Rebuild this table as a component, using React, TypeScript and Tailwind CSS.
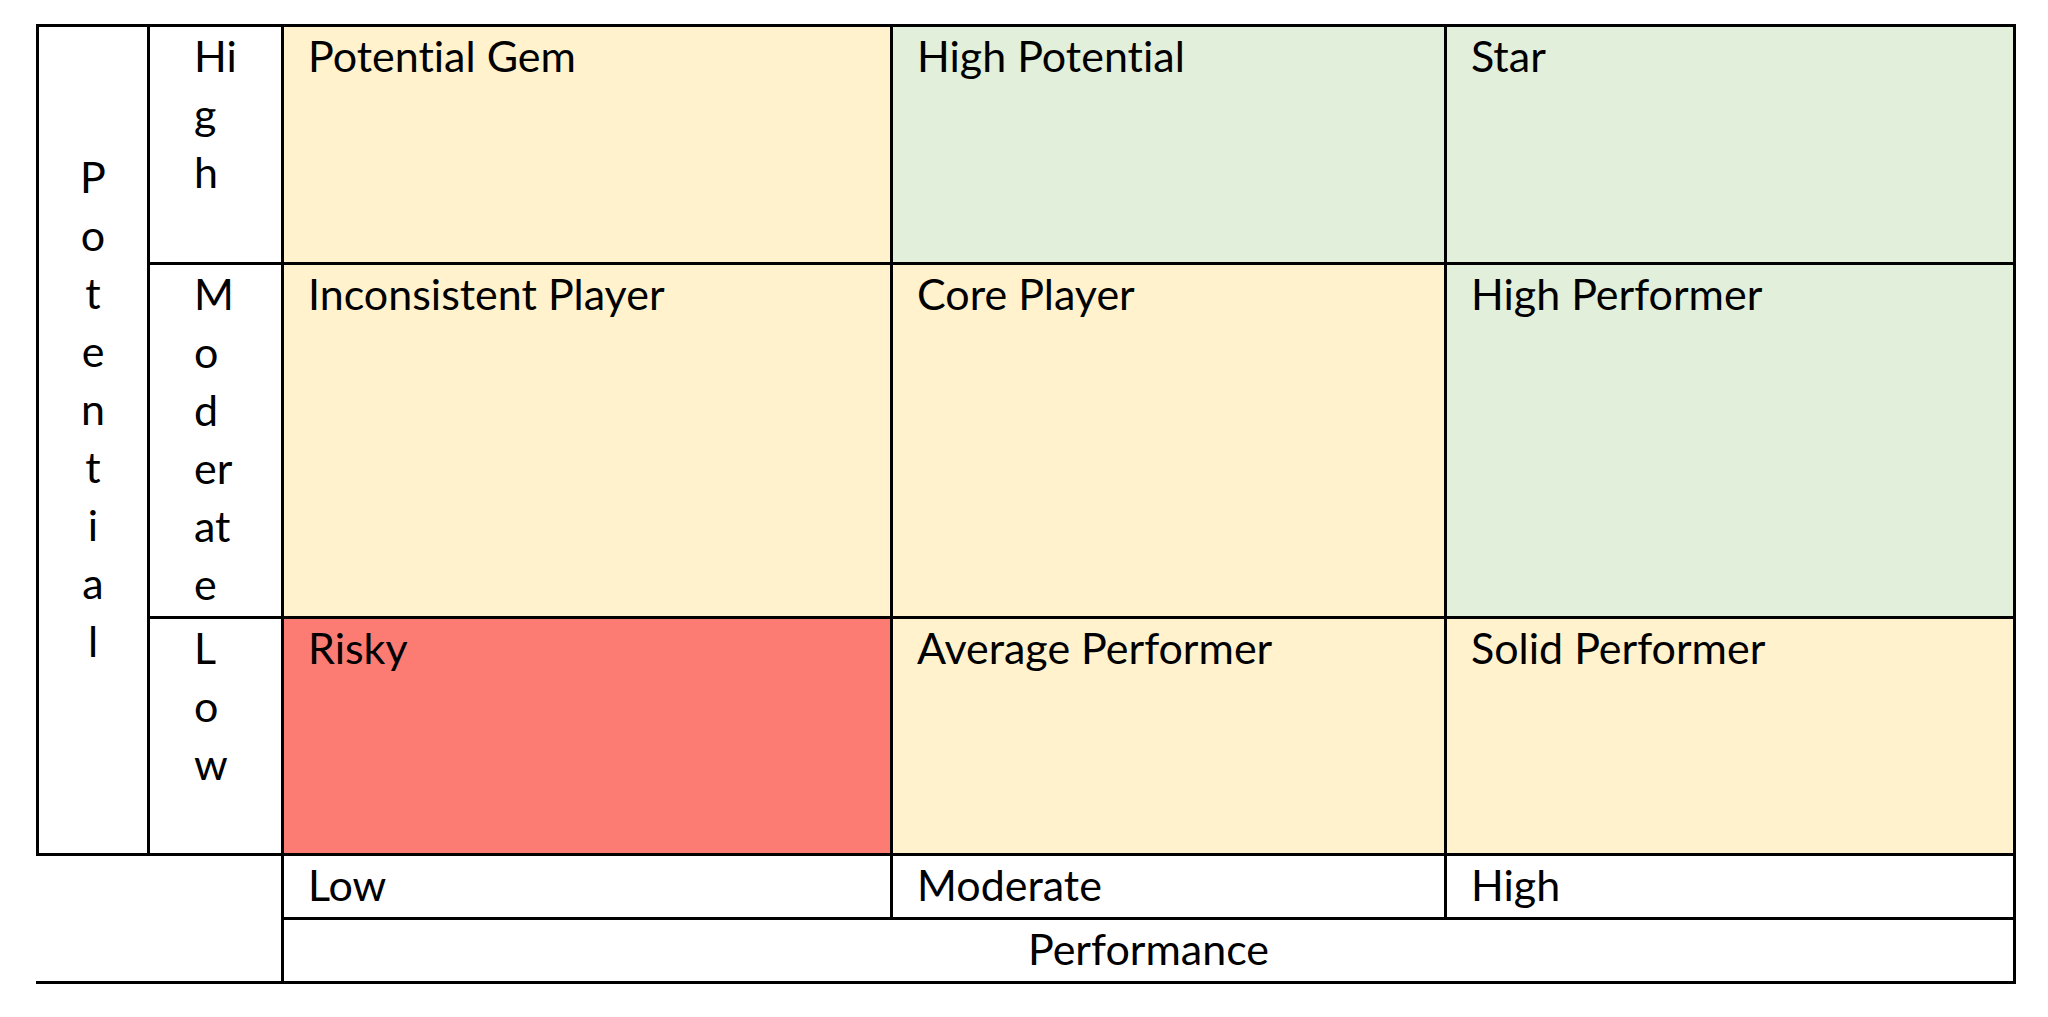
import React from "react";

const potentialLetters = ["P", "o", "t", "e", "n", "t", "i", "a", "l"];

const rowLabels = [
  { lines: ["Hi", "g", "h"], top: true },
  { lines: ["M", "o", "d", "er", "at", "e"], top: false },
  { lines: ["L", "o", "w"], top: false },
];

const cells = [
  [
    { label: "Potential Gem", bg: "bg-[#fff2cc]" },
    { label: "High Potential", bg: "bg-[#e2efda]" },
    { label: "Star", bg: "bg-[#e2efda]" },
  ],
  [
    { label: "Inconsistent Player", bg: "bg-[#fff2cc]" },
    { label: "Core Player", bg: "bg-[#fff2cc]" },
    { label: "High Performer", bg: "bg-[#e2efda]" },
  ],
  [
    { label: "Risky", bg: "bg-[#fc7b73]" },
    { label: "Average Performer", bg: "bg-[#fff2cc]" },
    { label: "Solid Performer", bg: "bg-[#fff2cc]" },
  ],
];

export default function App() {
  return (
    <div className="min-h-screen bg-white font-[Lato,sans-serif] text-[43px] leading-[58px] text-black [font-variant-ligatures:none]">
      <div className="ml-[36px] pt-[24px]">
        <div className="grid w-max grid-cols-[114px_134px_609px_554px_569px] grid-rows-[241px_354px_237px_64px_64px]">
          {/* Potential axis, spans the three rows */}
          <div className="col-start-1 row-span-3 row-start-1 flex flex-col items-center border-[3px] border-black pt-[121px]">
            {potentialLetters.map((l, i) => (
              <span key={i}>{l}</span>
            ))}
          </div>

          {rowLabels.map((row, r) => (
            <React.Fragment key={r}>
              <div
                className={
                  row.top
                    ? "col-start-2 flex flex-col border-t-[3px] border-r-[3px] border-b-[3px] border-black pl-[44px]"
                    : "col-start-2 flex flex-col border-r-[3px] border-b-[3px] border-black pl-[44px]"
                }
                style={{ gridRowStart: r + 1 }}
              >
                {row.lines.map((l, i) => (
                  <span key={i}>{l}</span>
                ))}
              </div>
              {cells[r].map((c, i) => (
                <div
                  key={i}
                  className={
                    (row.top
                      ? "border-t-[3px] border-r-[3px] border-b-[3px] border-black pl-[24px] "
                      : "border-r-[3px] border-b-[3px] border-black pl-[24px] ") + c.bg
                  }
                  style={{ gridRowStart: r + 1, gridColumnStart: i + 3 }}
                >
                  {c.label}
                </div>
              ))}
            </React.Fragment>
          ))}

          {/* blank corner under the axis */}
          <div className="col-span-2 col-start-1 row-span-2 row-start-4 border-r-[3px] border-b-[3px] border-black" />

          <div className="col-start-3 row-start-4 border-r-[3px] border-b-[3px] border-black pl-[24px]">Low</div>
          <div className="col-start-4 row-start-4 border-r-[3px] border-b-[3px] border-black pl-[24px]">Moderate</div>
          <div className="col-start-5 row-start-4 border-r-[3px] border-b-[3px] border-black pl-[24px]">High</div>

          <div className="col-span-3 col-start-3 row-start-5 border-r-[3px] border-b-[3px] border-black text-center">
            Performance
          </div>
        </div>
      </div>
    </div>
  );
}
